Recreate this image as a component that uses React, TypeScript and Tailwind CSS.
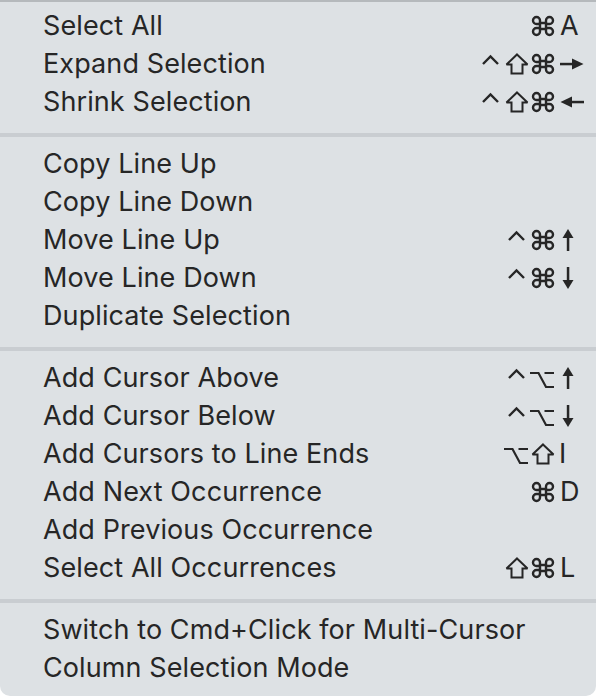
import React from "react";

type Mod = "ctrl" | "shift" | "cmd" | "opt";
type Key = "A" | "D" | "I" | "L" | "right" | "left" | "up" | "down";
type Item = { label: string; mods?: Mod[]; key?: Key };

const sections: Item[][] = [
  [
    { label: "Select All", mods: ["cmd"], key: "A" },
    { label: "Expand Selection", mods: ["ctrl", "shift", "cmd"], key: "right" },
    { label: "Shrink Selection", mods: ["ctrl", "shift", "cmd"], key: "left" },
  ],
  [
    { label: "Copy Line Up" },
    { label: "Copy Line Down" },
    { label: "Move Line Up", mods: ["ctrl", "cmd"], key: "up" },
    { label: "Move Line Down", mods: ["ctrl", "cmd"], key: "down" },
    { label: "Duplicate Selection" },
  ],
  [
    { label: "Add Cursor Above", mods: ["ctrl", "opt"], key: "up" },
    { label: "Add Cursor Below", mods: ["ctrl", "opt"], key: "down" },
    { label: "Add Cursors to Line Ends", mods: ["opt", "shift"], key: "I" },
    { label: "Add Next Occurrence", mods: ["cmd"], key: "D" },
    { label: "Add Previous Occurrence" },
    { label: "Select All Occurrences", mods: ["shift", "cmd"], key: "L" },
  ],
  [
    { label: "Switch to Cmd+Click for Multi-Cursor" },
    { label: "Column Selection Mode" },
  ],
];

// modifier glyphs, each drawn in a 26x22 cell
function ModIcon({ mod }: { mod: Mod }) {
  const common = {
    width: 26,
    height: 22,
    viewBox: "0 0 26 22",
    fill: "none",
    stroke: "#262626",
  };
  if (mod === "ctrl")
    return (
      <svg {...common} strokeWidth={2.4} strokeLinejoin="miter">
        <path d="M5 11 L12.5 3.5 L20 11" />
      </svg>
    );
  if (mod === "shift")
    return (
      <svg {...common} strokeWidth={2} strokeLinejoin="miter" strokeMiterlimit={2}>
        <path d="M13 1.5 L23.5 11.5 L18.5 11.5 L18.5 20.5 L7.5 20.5 L7.5 11.5 L2.5 11.5 Z" />
      </svg>
    );
  if (mod === "opt")
    return (
      <svg {...common} strokeWidth={2.2}>
        <path d="M0 6 H8.5 L16 20 H24 M14.5 6 H24" />
      </svg>
    );
  return (
    <svg {...common} strokeWidth={2.4}>
      <path d="M10 7.5 V14.5 M16 7.5 V14.5 M9 8 H17 M9 14 H17" />
      <path d="M10 8 V5.5 A3.5 3.5 0 1 0 6.5 9 H10" />
      <path d="M16 8 V5.5 A3.5 3.5 0 1 1 19.5 9 H16" />
      <path d="M10 14 V16.5 A3.5 3.5 0 1 1 6.5 13 H10" />
      <path d="M16 14 V16.5 A3.5 3.5 0 1 0 19.5 13 H16" />
    </svg>
  );
}

function KeyIcon({ k }: { k: Key }) {
  if (k === "right" || k === "left")
    return (
      <svg width={24} height={22} viewBox="0 0 24 22" fill="#262626" className={k === "left" ? "-scale-x-100" : ""}>
        <rect x="0" y="9.8" width="14" height="2.5" />
        <path d="M12 5.5 L23.5 11 L12 16.5 Z" />
      </svg>
    );
  if (k === "up" || k === "down")
    return (
      <svg width={12} height={22} viewBox="0 0 12 22" fill="#262626" className={"ml-[2px] " + (k === "down" ? "-scale-y-100" : "")}>
        <rect x="4.8" y="7" width="2.5" height="15" />
        <path d="M0.5 9 L6 0 L11.5 9 Z" />
      </svg>
    );
  return <span className={k === "I" ? "ml-[-1px]" : ""}>{k}</span>;
}

function Row({ item }: { item: Item }) {
  return (
    <div className="flex h-[38px] items-center pl-[43px] pr-[12px] text-[27px] leading-[38px] tracking-[0.1px] text-[#262626]">
      <span className="flex-1 whitespace-nowrap">{item.label}</span>
      {item.key && (
        <>
          <span className="flex items-center">
            {item.mods!.map((m, i) => (
              <ModIcon key={i} mod={m} />
            ))}
          </span>
          <span className="ml-[4px] flex w-[24px] items-center">
            <KeyIcon k={item.key} />
          </span>
        </>
      )}
    </div>
  );
}

export default function App() {
  return (
    <div className="h-[696px] w-[596px] bg-white font-['Inter','Liberation_Sans',sans-serif]">
      <div className="flex h-full flex-col rounded-b-[10px] border-t-2 border-[#b5b9bc] bg-[#dde1e4] pt-[5px] pb-[9px]">
        {sections.map((sec, i) => (
          <div key={i}>
            {i > 0 && <div className="mt-[12px] mb-[8px] h-[4px] bg-[#c9cdd1]" />}
            {sec.map((item) => (
              <Row key={item.label} item={item} />
            ))}
          </div>
        ))}
      </div>
    </div>
  );
}
